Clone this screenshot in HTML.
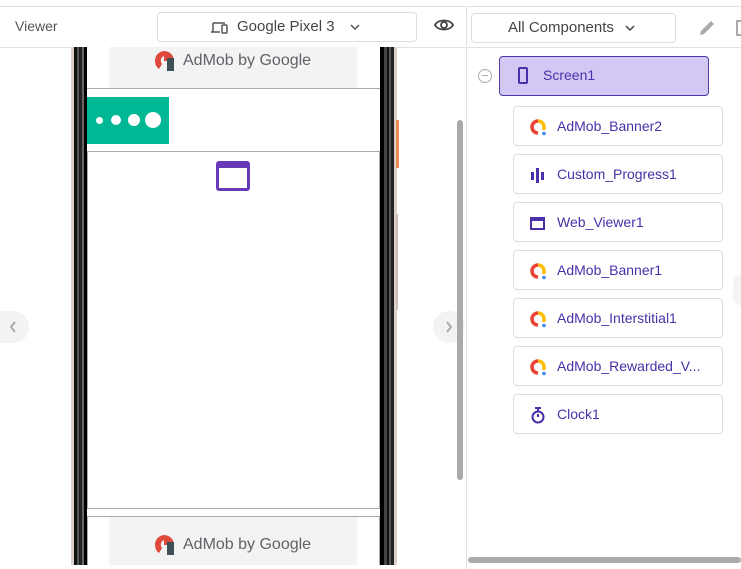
<!DOCTYPE html>
<html><head><style>
*{box-sizing:border-box;margin:0;padding:0}
body{width:741px;height:569px;overflow:hidden;background:#fff;font-family:"Liberation Sans",sans-serif;position:relative}
.a{position:absolute}
.item{position:absolute;left:513px;width:210px;height:40px;border:1px solid #ddd;border-radius:4px;background:#fff;font-size:14px;color:#4a2fa8;}
.item span{position:absolute;left:43px;top:11px}
.item svg{position:absolute;left:15px;top:11px}
.ad{position:absolute;background:#f3f3f3;font-size:16px;color:#5f6368}
</style></head><body>
<div class="a" style="left:0;top:6px;width:741px;height:1px;background:#e2e2e2"></div>
<div class="a" style="left:0;top:47px;width:466px;height:1px;background:#e2e2e2"></div>
<div class="a" style="left:466px;top:47px;width:275px;height:1px;background:#e2e2e2"></div>
<div class="a" style="left:466px;top:6px;width:1px;height:563px;background:#e2e2e2"></div>
<div class="a" style="left:15px;top:18px;font-size:14px;color:#555">Viewer</div>
<div class="a" style="left:157px;top:12px;width:260px;height:30px;border:1px solid #ddd;border-radius:4px"></div>
<svg class="a" style="left:210px;top:20px" width="20" height="16" viewBox="0 0 20 16"><path d="M3 3h12M3 3v9M1 12h9" stroke="#555" stroke-width="1.5" fill="none"/><rect x="12" y="5" width="5" height="8" rx="1" stroke="#555" stroke-width="1.5" fill="none"/></svg>
<div class="a" style="left:237px;top:18px;font-size:15px;color:#444">Google Pixel 3</div>
<svg class="a" style="left:350px;top:24px" width="10" height="6" viewBox="0 0 10 6"><path d="M1 1l4 4 4-4" stroke="#555" stroke-width="1.5" fill="none"/></svg>
<svg class="a" style="left:434px;top:18px" width="20" height="14" viewBox="0 0 20 14"><path d="M1 7C4 1 16 1 19 7C16 13 4 13 1 7Z" stroke="#444" stroke-width="1.8" fill="none"/><circle cx="10" cy="7" r="3" stroke="#444" stroke-width="1.8" fill="none"/></svg>
<!-- phone -->
<div class="a" style="left:71px;top:47px;width:3px;height:518px;background:#dccfca"></div>
<div class="a" style="left:74px;top:47px;width:13px;height:518px;background:linear-gradient(90deg,#111 0,#111 3px,#555 3px,#555 5px,#222 5px,#222 8px,#666 8px,#666 10px,#000 10px)"></div>
<div class="a" style="left:380px;top:47px;width:14px;height:518px;background:linear-gradient(90deg,#000 0,#000 4px,#444 4px,#444 7px,#111 7px,#111 9px,#555 9px,#555 11px,#222 11px)"></div>
<div class="a" style="left:394px;top:47px;width:3px;height:518px;background:#dccfca"></div>
<div class="a" style="left:396px;top:120px;width:3px;height:48px;background:#f08c5a"></div>
<div class="a" style="left:396px;top:214px;width:2px;height:96px;background:#cdbfba"></div>
<div class="a" style="left:87px;top:47px;width:293px;height:518px;background:#fff"></div>
<div class="ad" style="left:109px;top:47px;width:248px;height:41px"><svg class="a" style="left:44px;top:3px" width="22" height="22" viewBox="0 0 22 22"><path d="M11 1A10 10 0 0 0 6 19L9 14A5 5 0 0 1 11 6Z" fill="#e0483b"/><path d="M11 1A10 10 0 0 1 21 11H11Z" fill="#e0483b"/><rect x="14" y="8" width="7" height="13" fill="#3f5059"/></svg><span class="a" style="left:74px;top:5px">AdMob by Google</span></div>
<div class="a" style="left:87px;top:88px;width:293px;height:1px;background:#aaa"></div>
<div class="a" style="left:87px;top:97px;width:82px;height:47px;background:#00b894"></div>
<div class="a" style="left:96px;top:117px;width:7px;height:7px;border-radius:50%;background:#fff"></div>
<div class="a" style="left:111px;top:115px;width:10px;height:10px;border-radius:50%;background:#fff"></div>
<div class="a" style="left:128px;top:114px;width:12px;height:12px;border-radius:50%;background:#fff"></div>
<div class="a" style="left:145px;top:112px;width:16px;height:16px;border-radius:50%;background:#fff"></div>
<div class="a" style="left:87px;top:151px;width:293px;height:358px;border:1px solid #aaa"></div>
<div class="a" style="left:216px;top:161px;width:34px;height:30px;border:3px solid #673ab7;border-top-width:7px;border-radius:3px"></div>
<div class="a" style="left:87px;top:516px;width:293px;height:49px;border:1px solid #aaa;border-bottom:none"></div>
<div class="ad" style="left:109px;top:517px;width:248px;height:48px"><svg class="a" style="left:44px;top:17px" width="22" height="22" viewBox="0 0 22 22"><path d="M11 1A10 10 0 0 0 6 19L9 14A5 5 0 0 1 11 6Z" fill="#e0483b"/><path d="M11 1A10 10 0 0 1 21 11H11Z" fill="#e0483b"/><rect x="14" y="8" width="7" height="13" fill="#3f5059"/></svg><span class="a" style="left:74px;top:19px">AdMob by Google</span></div>
<div class="a" style="left:0;top:311px;width:29px;height:32px;border-radius:0 16px 16px 0;background:#f3f3f3"></div>
<svg class="a" style="left:9px;top:320px" width="8" height="14" viewBox="0 0 8 14"><path d="M6 2L2 7l4 5" stroke="#aaa" stroke-width="2" fill="none"/></svg>
<div class="a" style="left:433px;top:311px;width:32px;height:32px;border-radius:16px;background:#f3f3f3"></div>
<svg class="a" style="left:445px;top:320px" width="8" height="14" viewBox="0 0 8 14"><path d="M2 2l4 5-4 5" stroke="#aaa" stroke-width="2" fill="none"/></svg>
<div class="a" style="left:457px;top:120px;width:6px;height:360px;border-radius:3px;background:#aaa"></div>
<!-- right -->
<div class="a" style="left:471px;top:13px;width:205px;height:30px;border:1px solid #ddd;border-radius:4px"></div>
<div class="a" style="left:508px;top:19px;font-size:15px;color:#444">All Components</div>
<svg class="a" style="left:625px;top:25px" width="10" height="6" viewBox="0 0 10 6"><path d="M1 1l4 4 4-4" stroke="#444" stroke-width="1.5" fill="none"/></svg>
<svg class="a" style="left:698px;top:19px" width="18" height="18" viewBox="0 0 18 18"><path d="M2 16l1-4L13 2l3 3L6 15Z" fill="#aaa"/></svg>
<div class="a" style="left:736px;top:20px;width:5px;height:16px;border:2px solid #aaa;border-right:none"></div>
<div class="a" style="left:478px;top:69px;width:14px;height:14px;border:1px solid #aaa;border-radius:50%"></div>
<div class="a" style="left:482px;top:75px;width:6px;height:1px;background:#aaa"></div>
<div class="a" style="left:499px;top:56px;width:210px;height:40px;background:#d3c8f4;border:1px solid #4c37a5;border-radius:4px"></div>
<div class="a" style="left:518px;top:67px;width:10px;height:17px;border:2px solid #4a2fa8;border-radius:2px"></div>
<div class="a" style="left:543px;top:67px;font-size:14px;color:#4a2fa8">Screen1</div>
<div class="item" style="top:106px"><svg width="18" height="18" viewBox="0 0 18 18"><path d="M9 15A6 6 0 0 1 9 3" stroke="#ea4335" stroke-width="3.5" fill="none"/><path d="M9 3A6 6 0 0 1 15 9V12" stroke="#fbbc04" stroke-width="3.5" fill="none"/><circle cx="15" cy="15.5" r="1.8" fill="#4285f4"/></svg><span>AdMob_Banner2</span></div>
<div class="item" style="top:154px"><svg width="18" height="18" viewBox="0 0 18 18"><rect x="2" y="6" width="3" height="8" fill="#4a2fa8"/><rect x="7" y="2" width="3" height="15" fill="#4a2fa8"/><rect x="12" y="6" width="3" height="8" fill="#4a2fa8"/></svg><span>Custom_Progress1</span></div>
<div class="item" style="top:202px"><svg width="18" height="18" viewBox="0 0 18 18"><rect x="2" y="4" width="13" height="11" stroke="#4a2fa8" stroke-width="2" fill="none"/><rect x="2" y="4" width="13" height="3" fill="#4a2fa8"/></svg><span>Web_Viewer1</span></div>
<div class="item" style="top:250px"><svg width="18" height="18" viewBox="0 0 18 18"><path d="M9 15A6 6 0 0 1 9 3" stroke="#ea4335" stroke-width="3.5" fill="none"/><path d="M9 3A6 6 0 0 1 15 9V12" stroke="#fbbc04" stroke-width="3.5" fill="none"/><circle cx="15" cy="15.5" r="1.8" fill="#4285f4"/></svg><span>AdMob_Banner1</span></div>
<div class="item" style="top:298px"><svg width="18" height="18" viewBox="0 0 18 18"><path d="M9 15A6 6 0 0 1 9 3" stroke="#ea4335" stroke-width="3.5" fill="none"/><path d="M9 3A6 6 0 0 1 15 9V12" stroke="#fbbc04" stroke-width="3.5" fill="none"/><circle cx="15" cy="15.5" r="1.8" fill="#4285f4"/></svg><span>AdMob_Interstitial1</span></div>
<div class="item" style="top:346px"><svg width="18" height="18" viewBox="0 0 18 18"><path d="M9 15A6 6 0 0 1 9 3" stroke="#ea4335" stroke-width="3.5" fill="none"/><path d="M9 3A6 6 0 0 1 15 9V12" stroke="#fbbc04" stroke-width="3.5" fill="none"/><circle cx="15" cy="15.5" r="1.8" fill="#4285f4"/></svg><span>AdMob_Rewarded_V...</span></div>
<div class="item" style="top:394px"><svg width="18" height="18" viewBox="0 0 18 18"><path d="M6 2h6M9 2v3" stroke="#4a2fa8" stroke-width="2"/><circle cx="9" cy="11" r="5.5" stroke="#4a2fa8" stroke-width="2" fill="none"/><path d="M9 8v3" stroke="#4a2fa8" stroke-width="2"/></svg><span>Clock1</span></div>
<div class="a" style="left:733px;top:274px;width:20px;height:32px;border-radius:16px;background:#f3f3f3"></div>
<div class="a" style="left:468px;top:557px;width:273px;height:6px;border-radius:3px;background:#aaa"></div>
</body></html>
